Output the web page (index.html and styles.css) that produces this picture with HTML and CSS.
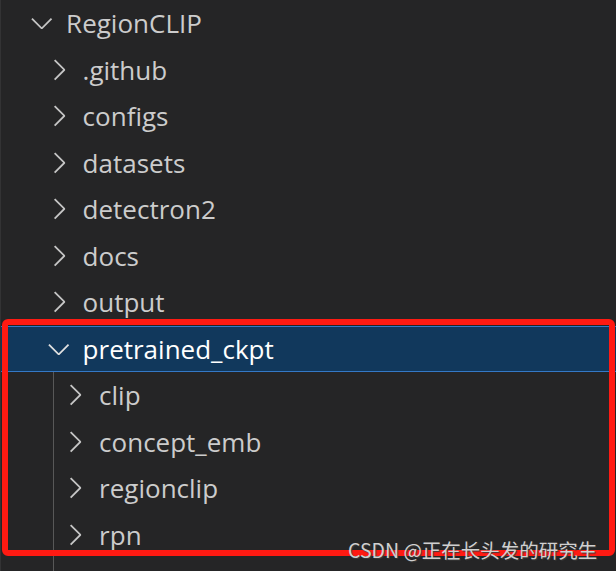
FILE: index.html
```html
<!DOCTYPE html>
<html>
<head>
<meta charset="utf-8">
<link rel="stylesheet" href="styles.css">
</head>
<body>
<div class="tree">
  <div class="row l0">
    <span class="twistie"><svg viewBox="0 0 16 16"><path d="M7.976 10.072l4.357-4.357.62.618L8.284 11h-.618L3 6.333l.619-.618 4.357 4.357z"/></svg></span>
    <span class="label">RegionCLIP</span>
  </div>
  <div class="row l1">
    <span class="twistie"><svg viewBox="0 0 16 16"><path d="M10.072 8.024L5.715 3.667l.618-.62L11 7.716v.618L6.333 13l-.618-.619 4.357-4.357z"/></svg></span>
    <span class="label">.github</span>
  </div>
  <div class="row l1">
    <span class="twistie"><svg viewBox="0 0 16 16"><path d="M10.072 8.024L5.715 3.667l.618-.62L11 7.716v.618L6.333 13l-.618-.619 4.357-4.357z"/></svg></span>
    <span class="label">configs</span>
  </div>
  <div class="row l1">
    <span class="twistie"><svg viewBox="0 0 16 16"><path d="M10.072 8.024L5.715 3.667l.618-.62L11 7.716v.618L6.333 13l-.618-.619 4.357-4.357z"/></svg></span>
    <span class="label">datasets</span>
  </div>
  <div class="row l1">
    <span class="twistie"><svg viewBox="0 0 16 16"><path d="M10.072 8.024L5.715 3.667l.618-.62L11 7.716v.618L6.333 13l-.618-.619 4.357-4.357z"/></svg></span>
    <span class="label">detectron2</span>
  </div>
  <div class="row l1">
    <span class="twistie"><svg viewBox="0 0 16 16"><path d="M10.072 8.024L5.715 3.667l.618-.62L11 7.716v.618L6.333 13l-.618-.619 4.357-4.357z"/></svg></span>
    <span class="label">docs</span>
  </div>
  <div class="row l1">
    <span class="twistie"><svg viewBox="0 0 16 16"><path d="M10.072 8.024L5.715 3.667l.618-.62L11 7.716v.618L6.333 13l-.618-.619 4.357-4.357z"/></svg></span>
    <span class="label">output</span>
  </div>
  <div class="row l1 selected">
    <span class="twistie"><svg viewBox="0 0 16 16"><path d="M7.976 10.072l4.357-4.357.62.618L8.284 11h-.618L3 6.333l.619-.618 4.357 4.357z"/></svg></span>
    <span class="label">pretrained_ckpt</span>
  </div>
  <div class="group">
    <div class="row l2">
      <span class="twistie"><svg viewBox="0 0 16 16"><path d="M10.072 8.024L5.715 3.667l.618-.62L11 7.716v.618L6.333 13l-.618-.619 4.357-4.357z"/></svg></span>
      <span class="label">clip</span>
    </div>
    <div class="row l2">
      <span class="twistie"><svg viewBox="0 0 16 16"><path d="M10.072 8.024L5.715 3.667l.618-.62L11 7.716v.618L6.333 13l-.618-.619 4.357-4.357z"/></svg></span>
      <span class="label">concept_emb</span>
    </div>
    <div class="row l2">
      <span class="twistie"><svg viewBox="0 0 16 16"><path d="M10.072 8.024L5.715 3.667l.618-.62L11 7.716v.618L6.333 13l-.618-.619 4.357-4.357z"/></svg></span>
      <span class="label">regionclip</span>
    </div>
    <div class="row l2">
      <span class="twistie"><svg viewBox="0 0 16 16"><path d="M10.072 8.024L5.715 3.667l.618-.62L11 7.716v.618L6.333 13l-.618-.619 4.357-4.357z"/></svg></span>
      <span class="label">rpn</span>
    </div>
    <div class="row l2 tail"></div>
  </div>
</div>
<div class="annot"></div>
<div class="watermark">CSDN @正在长头发的研究生</div>
</body>
</html>
```

FILE: styles.css
```css
html, body {
  margin: 0;
  padding: 0;
  background: #252526;
  overflow: hidden;
}
body {
  width: 616px;
  height: 571px;
  position: relative;
  font-family: "Open Sans", "Noto Sans", sans-serif;
}
.tree {
  display: flex;
  flex-direction: column;
  border-left: 1px solid #333334;
  height: 571px;
  box-sizing: border-box;
  overflow: hidden;
}
.row {
  height: 46.5px;
  flex: 0 0 46.5px;
  display: flex;
  align-items: center;
  box-sizing: border-box;
  color: #cccccc;
  font-size: 26px;
}
.row.l0 { padding-left: 24px; }
.row.l1 { padding-left: 40.5px; }
.row.l2 { padding-left: 57px; }
.row.tail { flex-basis: 40px; height: 40px; }
.twistie {
  width: 33.6px;
  height: 33.6px;
  flex: 0 0 33.6px;
  display: flex;
}
.twistie svg {
  width: 33.6px;
  height: 33.6px;
  fill: #c5c5c5;
}
.label {
  margin-left: 7.5px;
  white-space: nowrap;
  line-height: 1;
}
.row.selected {
  background: #11385c;
  border-top: 1px solid #3478c6;
  border-bottom: 1px solid #3478c6;
  color: #ffffff;
}
.row.selected .twistie svg { fill: #e0e0e0; }
.group {
  background: linear-gradient(#585858, #585858) 52px 0 / 1px 100% no-repeat;
}
.annot {
  position: absolute;
  left: 2px;
  top: 319px;
  width: 613px;
  height: 237px;
  box-sizing: border-box;
  border: 6px solid #ff1a12;
  border-radius: 6px;
}
.watermark {
  position: absolute;
  left: 348px;
  top: 538px;
  font-family: "Noto Sans CJK SC", "Liberation Sans", sans-serif;
  font-size: 19.5px;
  line-height: 24px;
  color: #d0d0d0;
  text-shadow: 1px 1px 1px #3a3a3a;
  white-space: nowrap;
}
```
